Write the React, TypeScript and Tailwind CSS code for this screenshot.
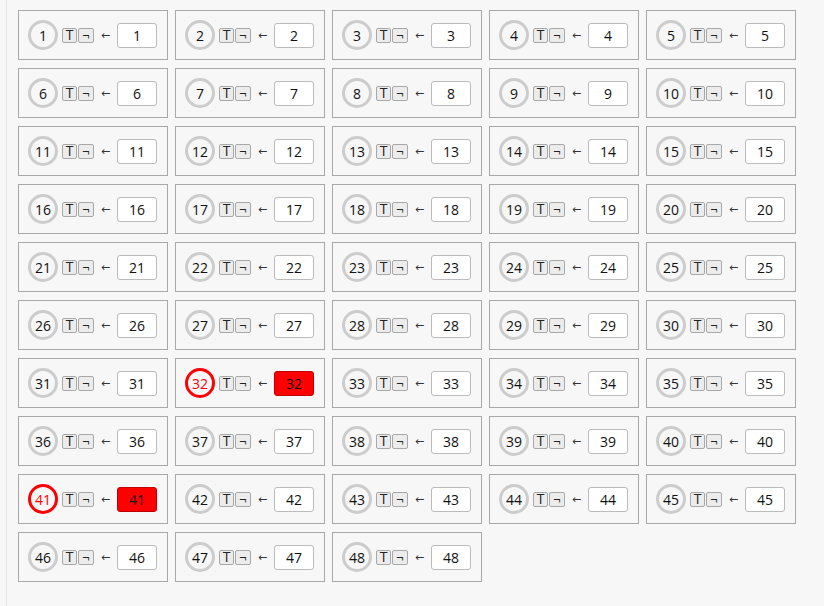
const errors = new Set([32, 41]);
const items = Array.from({ length: 48 }, (_, i) => i + 1);

function Cell({ n }: { n: number }) {
  const bad = errors.has(n);
  return (
    <div className="flex h-[50px] w-[150px] items-center border border-[#a8a8a8] pl-[9px]">
      <div
        className={
          bad
            ? "flex h-[30px] w-[30px] shrink-0 items-center justify-center rounded-full border-[3px] border-[#ff0000] text-[14px] text-[#ff0000]"
            : "flex h-[30px] w-[30px] shrink-0 items-center justify-center rounded-full border-[3px] border-[#cccccc] text-[14px] text-[#111]"
        }
      >
        {n}
      </div>
      <div className="ml-[4px] flex gap-[1px]">
        <span className="flex h-[15px] w-[15px] items-center justify-center rounded-[2px] border border-[#a8a8a8] bg-[#ececec] text-[14px] leading-none text-[#222]">
          T
        </span>
        <span className="flex h-[15px] w-[16px] items-center justify-center rounded-[2px] border border-[#a8a8a8] bg-[#ececec] text-[13px] leading-none text-[#222]">
          ¬
        </span>
      </div>
      <span
        className="ml-[7px] text-[11px] leading-none text-[#333]"
        style={{ fontFamily: '"DejaVu Sans", sans-serif' }}
      >
        ←
      </span>
      <div
        className={
          bad
            ? "ml-auto mr-[10px] flex h-[25px] w-[40px] items-center justify-center rounded-[3px] border border-[#c00000] bg-[#ff0000] text-[14px] text-[#111]"
            : "ml-auto mr-[10px] flex h-[25px] w-[40px] items-center justify-center rounded-[3px] border border-[#bbbbbb] bg-white text-[14px] text-[#111]"
        }
      >
        {n}
      </div>
    </div>
  );
}

export default function App() {
  return (
    <div
      className="min-h-[606px] bg-[#f7f7f7] pl-[6px]"
      style={{ fontFamily: '"Open Sans", "Noto Sans", sans-serif' }}
    >
      <div className="min-h-[606px] border-l border-[#e4e4e4] pl-[11px] pt-[10px]">
        <div className="grid grid-cols-[repeat(5,150px)] gap-x-[7px] gap-y-[8px]">
          {items.map((n) => (
            <Cell key={n} n={n} />
          ))}
        </div>
      </div>
    </div>
  );
}
